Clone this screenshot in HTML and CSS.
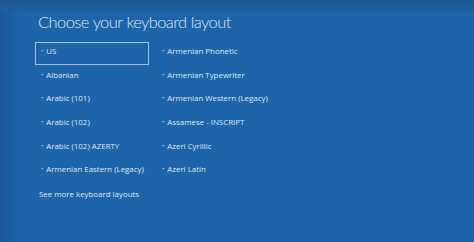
FILE: index.html
```html
<!DOCTYPE html>
<html lang="en">
<head>
<meta charset="utf-8">
<title>Choose your keyboard layout</title>
<link rel="stylesheet" href="styles.css">
</head>
<body>
<main class="screen">
  <h1 class="title">Choose your keyboard layout</h1>
  <ul class="layouts">
    <li class="layout selected">US</li>
    <li class="layout">Armenian Phonetic</li>
    <li class="layout">Albanian</li>
    <li class="layout">Armenian Typewriter</li>
    <li class="layout">Arabic (101)</li>
    <li class="layout">Armenian Western (Legacy)</li>
    <li class="layout">Arabic (102)</li>
    <li class="layout">Assamese - INSCRIPT</li>
    <li class="layout">Arabic (102) AZERTY</li>
    <li class="layout">Azeri Cyrillic</li>
    <li class="layout">Armenian Eastern (Legacy)</li>
    <li class="layout">Azeri Latin</li>
  </ul>
  <a class="more">See more keyboard layouts</a>
</main>
</body>
</html>
```
FILE: styles.css
```css
html, body {
  margin: 0;
  padding: 0;
}
body {
  width: 474px;
  height: 242px;
  overflow: hidden;
  font-family: "Open Sans", "Noto Sans", "Liberation Sans", sans-serif;
  color: #e6eef8;
  background:
    linear-gradient(to bottom, #1a558f 0px, #1c5d9d 9px, rgba(30,100,168,0) 14px),
    linear-gradient(to right, #1a5797 0px, #1c5ea0 10px, rgba(30,100,168,0) 18px),
    #1e64a8;
}
.screen {
  display: flex;
  flex-direction: column;
  padding: 9px 0 0 35px;
}
.title {
  margin: 0 0 0 3px;
  font-family: Lato, "Open Sans", sans-serif;
  font-size: 16.5px;
  font-weight: 300;
  line-height: 26px;
  color: #d9e6f4;
  letter-spacing: -0.6px;
  word-spacing: 0.5px;
}
.layouts {
  list-style: none;
  margin: 7px 0 0 0;
  padding: 0;
  display: grid;
  grid-template-columns: 114px 114px;
  column-gap: 7px;
  grid-auto-rows: 23.7px;
}
.layout {
  box-sizing: border-box;
  height: 23px;
  padding: 2px 0 0 5px;
  font-size: 7.9px;
  line-height: 12px;
  color: #dbe6f3;
  white-space: nowrap;
  border: 1px solid transparent;
}
.layout::before {
  content: "\2022";
  font-size: 6px;
  margin-right: 3px;
  color: #c6d6ea;
  vertical-align: 1px;
}
.layout.selected {
  border-color: #9ebde0;
}
.more {
  margin: 4px 0 0 4px;
  font-size: 7.9px;
  line-height: 12px;
  color: #dbe6f3;
}
```
